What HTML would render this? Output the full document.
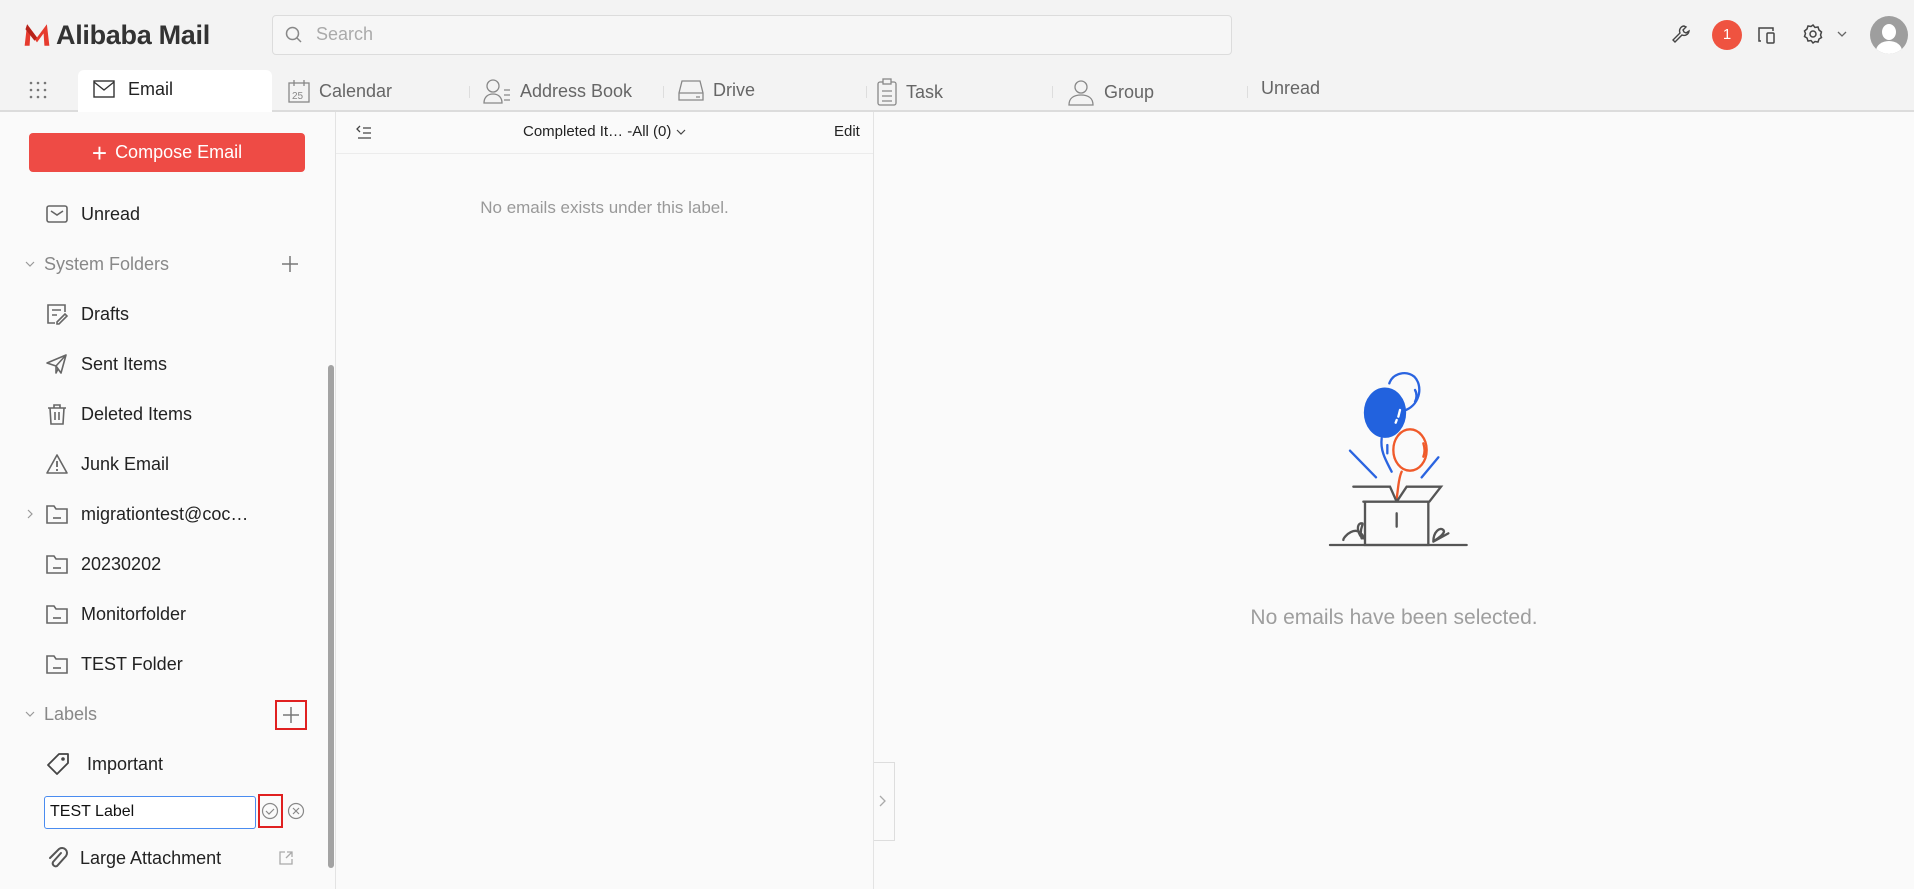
<!DOCTYPE html>
<html><head><meta charset="utf-8"><style>
*{box-sizing:border-box;margin:0;padding:0}
body{width:1914px;height:889px;overflow:hidden;background:#fafafa;font-family:"Liberation Sans",Arial,sans-serif;position:relative;color:#222}
.abs{position:absolute}
#hdr{left:0;top:0;width:1914px;height:112px;background:#f3f3f3;border-bottom:2px solid #dcdcdc}
.tab{position:absolute;top:78px;font-size:18px;color:#666;display:flex;align-items:center;gap:8px}
.sep{position:absolute;top:86px;width:1px;height:12px;background:#ddd}
.item{position:absolute;left:0;width:320px;height:40px;display:flex;align-items:center;font-size:18px;color:#222}
.item svg{position:absolute;left:45px}
.item span{position:absolute;left:81px}
.sec{color:#888}
</style></head><body>
<div id="hdr" class="abs"></div>
<!-- logo -->
<svg class="abs" style="left:23px;top:21px" width="28" height="28" viewBox="0 0 34 30"><path d="M2 28 L5 2 L17 18 L29 2 L32 28 L26 28 L25 13 L17 24 L9 13 L8 28Z" fill="#e63b2e"/><path d="M5 2 L17 18 L14 22 L3 8Z" fill="#b8231a"/></svg>
<div class="abs" style="left:56px;top:20px;font-size:27px;font-weight:bold;color:#333;letter-spacing:-0.3px">Alibaba Mail</div>
<!-- search -->
<div class="abs" style="left:272px;top:15px;width:960px;height:40px;border:1px solid #dcdcdc;border-radius:4px;background:#f6f6f6"></div>
<svg class="abs" style="left:284px;top:25px" width="20" height="20" viewBox="0 0 20 20"><circle cx="8.5" cy="8.5" r="6" fill="none" stroke="#888" stroke-width="1.5"/><path d="M13 13l4 4" stroke="#888" stroke-width="1.5"/></svg>
<div class="abs" style="left:316px;top:24px;font-size:18px;color:#aaa">Search</div>
<!-- right icons -->
<svg class="abs" style="left:1670px;top:23px" width="22" height="22" viewBox="0 0 22 22"><path d="M14 3a5 5 0 0 0-4 7L3 17l2 2 7-7a5 5 0 0 0 7-4l-3 2-2-1-1-2 3-3z" fill="none" stroke="#444" stroke-width="1.4"/></svg>
<div class="abs" style="left:1712px;top:20px;width:30px;height:30px;border-radius:50%;background:#ef5340;color:#fff;font-size:15px;text-align:center;line-height:30px">1</div>
<svg class="abs" style="left:1756px;top:24px" width="22" height="22" viewBox="0 0 22 22"><path d="M5 17H3V4h14v3" fill="none" stroke="#444" stroke-width="1.5"/><rect x="11" y="9" width="7" height="10" rx="1" fill="none" stroke="#444" stroke-width="1.5"/></svg>
<svg class="abs" style="left:1802px;top:23px" width="22" height="22" viewBox="0 0 22 22"><circle cx="11" cy="11" r="3" fill="none" stroke="#444" stroke-width="1.5"/><path d="M11 2l2 2.5 3-.5 1 3 2.5 2-1 3 1 2.5-2.5 1.5-1 3-3-.5L11 20l-2-2.5-3 .5-1-3-2.5-1.5 1-3-1-2.5 2.5-2 1-3 3 .5z" fill="none" stroke="#444" stroke-width="1.5"/></svg>
<svg class="abs" style="left:1837px;top:30px" width="10" height="8"><path d="M1 2l4 4 4-4" fill="none" stroke="#666" stroke-width="1.3"/></svg>
<div class="abs" style="left:1870px;top:16px;width:38px;height:38px;border-radius:50%;background:#9e9e9e;overflow:hidden"><div class="abs" style="left:12px;top:8px;width:14px;height:16px;border-radius:50%;background:#fff"></div><div class="abs" style="left:6px;top:25px;width:26px;height:20px;border-radius:50% 50% 0 0;background:#fff"></div></div>
<!-- tabs -->
<svg class="abs" style="left:28px;top:80px" width="20" height="20"><g fill="#777"><circle cx="3" cy="3" r="1.3"/><circle cx="10" cy="3" r="1.3"/><circle cx="17" cy="3" r="1.3"/><circle cx="3" cy="10" r="1.3"/><circle cx="10" cy="10" r="1.3"/><circle cx="17" cy="10" r="1.3"/><circle cx="3" cy="17" r="1.3"/><circle cx="10" cy="17" r="1.3"/><circle cx="17" cy="17" r="1.3"/></g></svg>
<div class="abs" style="left:78px;top:70px;width:194px;height:42px;background:#fff;border-radius:6px 6px 0 0"></div>
<div class="tab" style="left:92px;color:#222;gap:12px"><svg width="24" height="22"><rect x="2" y="3" width="20" height="16" fill="none" stroke="#333" stroke-width="1.4"/><path d="M2 4l10 8 10-8" fill="none" stroke="#333" stroke-width="1.4"/></svg>Email</div>
<div class="tab" style="left:287px"><svg width="24" height="26"><rect x="2" y="5" width="20" height="19" fill="none" stroke="#888" stroke-width="1.3"/><path d="M7 2v6M17 2v6" stroke="#888" stroke-width="1.3"/><text x="5" y="21" font-size="10" fill="#888" font-family="Liberation Sans">25</text></svg>Calendar</div>
<div class="sep" style="left:469px"></div>
<div class="tab" style="left:482px"><svg width="30" height="26"><circle cx="11" cy="8" r="6" fill="none" stroke="#888" stroke-width="1.3"/><path d="M2 25c0-6 4-9 9-9s9 3 9 9z" fill="none" stroke="#888" stroke-width="1.3"/><path d="M22 12h6M22 17h6M22 22h6" stroke="#888" stroke-width="1.3"/></svg>Address Book</div>
<div class="sep" style="left:663px"></div>
<div class="tab" style="left:677px"><svg width="28" height="24"><path d="M5 3h18l3 12v7H2v-7z" fill="none" stroke="#888" stroke-width="1.3"/><path d="M2 15h24M19 19h4" stroke="#888" stroke-width="1.3"/></svg>Drive</div>
<div class="sep" style="left:866px"></div>
<div class="tab" style="left:876px"><svg width="22" height="28"><rect x="2" y="4" width="18" height="23" rx="2" fill="none" stroke="#888" stroke-width="1.3"/><rect x="7" y="1" width="8" height="5" fill="#f3f3f3" stroke="#888" stroke-width="1.3"/><path d="M6 13h10M6 18h10M6 23h10" stroke="#888" stroke-width="1.3"/></svg>Task</div>
<div class="sep" style="left:1052px"></div>
<div class="tab" style="left:1066px"><svg width="30" height="28"><circle cx="15" cy="9" r="6" fill="none" stroke="#888" stroke-width="1.3"/><path d="M3 27c0-7 5-10 12-10s12 3 12 10z" fill="none" stroke="#888" stroke-width="1.3"/></svg>Group</div>
<div class="sep" style="left:1247px"></div>
<div class="tab" style="left:1261px">Unread</div>
<!-- panes -->
<div class="abs" style="left:335px;top:112px;width:1px;height:777px;background:#e3e3e3"></div>
<div class="abs" style="left:873px;top:112px;width:1px;height:777px;background:#e3e3e3"></div>
<div class="abs" style="left:328px;top:365px;width:6px;height:503px;background:#a3a3a3;border-radius:3px"></div>
<!-- compose -->
<div class="abs" style="left:29px;top:133px;width:276px;height:39px;background:#ee4b45;border-radius:4px;color:#fff;font-size:18px;display:flex;align-items:center;justify-content:center;gap:8px"><span style="font-size:26px;font-weight:300;line-height:1">+</span>Compose Email</div>
<!-- sidebar -->
<div class="item" style="top:194px"><svg width="24" height="22"><rect x="2" y="3" width="20" height="16" rx="2" fill="none" stroke="#666" stroke-width="1.6"/><path d="M6 8l6 4 6-4" fill="none" stroke="#666" stroke-width="1.6"/></svg><span>Unread</span></div>
<div class="item sec" style="top:244px"><svg style="left:25px" width="10" height="8"><path d="M1 2l4 4 4-4" fill="none" stroke="#999" stroke-width="1.2"/></svg><span style="left:44px;color:#888">System Folders</span><svg style="left:280px" width="20" height="20"><path d="M10 2v16M2 10h16" stroke="#777" stroke-width="1.5"/></svg></div>
<div class="item" style="top:294px"><svg width="24" height="24"><path d="M20 10V3H3v18h7" fill="none" stroke="#666" stroke-width="1.6"/><path d="M7 8h9M7 13h5M12 20l8-8 2 2-8 8h-2z" fill="none" stroke="#666" stroke-width="1.6"/></svg><span>Drafts</span></div>
<div class="item" style="top:344px"><svg width="24" height="24"><path d="M2 11L21 3l-5 18-5-7z M11 14v7l2-4 M11 14l10-11" fill="none" stroke="#666" stroke-width="1.6" stroke-linejoin="round"/></svg><span>Sent Items</span></div>
<div class="item" style="top:394px"><svg width="24" height="24"><path d="M3 6h18M9 6V3h6v3M5 6l1 16h12l1-16M10 10v8M14 10v8" fill="none" stroke="#666" stroke-width="1.6"/></svg><span>Deleted Items</span></div>
<div class="item" style="top:444px"><svg width="24" height="24"><path d="M12 3L2 21h20z" fill="none" stroke="#666" stroke-width="1.6" stroke-linejoin="round"/><path d="M12 9v6M12 17v2" stroke="#666" stroke-width="1.8"/></svg><span>Junk Email</span></div>
<div class="item" style="top:494px"><svg style="left:26px" width="8" height="12"><path d="M2 2l4 4-4 4" fill="none" stroke="#999" stroke-width="1.2"/></svg><svg width="24" height="22"><path d="M2 3h7l2 3h11v14H2z" fill="none" stroke="#666" stroke-width="1.6"/><path d="M8 15h8" stroke="#666" stroke-width="1.6"/></svg><span>migrationtest@coc…</span></div>
<div class="item" style="top:544px"><svg width="24" height="22"><path d="M2 3h7l2 3h11v14H2z" fill="none" stroke="#666" stroke-width="1.6"/><path d="M8 15h8" stroke="#666" stroke-width="1.6"/></svg><span>20230202</span></div>
<div class="item" style="top:594px"><svg width="24" height="22"><path d="M2 3h7l2 3h11v14H2z" fill="none" stroke="#666" stroke-width="1.6"/><path d="M8 15h8" stroke="#666" stroke-width="1.6"/></svg><span>Monitorfolder</span></div>
<div class="item" style="top:644px"><svg width="24" height="22"><path d="M2 3h7l2 3h11v14H2z" fill="none" stroke="#666" stroke-width="1.6"/><path d="M8 15h8" stroke="#666" stroke-width="1.6"/></svg><span>TEST Folder</span></div>
<div class="item sec" style="top:694px"><svg style="left:25px" width="10" height="8"><path d="M1 2l4 4 4-4" fill="none" stroke="#999" stroke-width="1.2"/></svg><span style="left:44px;color:#888">Labels</span></div>
<div class="abs" style="left:275px;top:700px;width:32px;height:30px;border:2px solid #e02020"></div>
<svg class="abs" style="left:281px;top:705px" width="20" height="20"><path d="M10 2v16M2 10h16" stroke="#777" stroke-width="1.5"/></svg>
<div class="item" style="top:744px"><svg width="26" height="26"><path d="M14 3h9v9L12 23 3 14z" fill="none" stroke="#444" stroke-width="1.8" stroke-linejoin="round"/><circle cx="18" cy="8" r="1.8" fill="#444"/></svg><span style="left:87px">Important</span></div>
<div class="abs" style="left:44px;top:796px;width:212px;height:33px;border:1.5px solid #4a8cf0;border-radius:3px;background:#fff;font-size:16px;padding:6px 5px;color:#111">TEST Label</div>
<div class="abs" style="left:258px;top:794px;width:25px;height:34px;border:2px solid #e02020"></div>
<svg class="abs" style="left:261px;top:802px" width="18" height="18"><circle cx="9" cy="9" r="7.5" fill="none" stroke="#888" stroke-width="1.2"/><path d="M5 9l3 3 5-5" fill="none" stroke="#888" stroke-width="1.2"/></svg>
<svg class="abs" style="left:287px;top:802px" width="18" height="18"><circle cx="9" cy="9" r="7.5" fill="none" stroke="#888" stroke-width="1.2"/><path d="M6 6l6 6M12 6l-6 6" stroke="#888" stroke-width="1.2"/></svg>
<div class="item" style="top:838px"><svg width="24" height="26"><path d="M16 8l-8 9a3 3 0 0 0 4 4l9-10a5 5 0 0 0-7-7L5 13" fill="none" stroke="#555" stroke-width="2" stroke-linecap="round"/></svg><span style="left:80px">Large Attachment</span><svg style="left:278px" width="16" height="16"><path d="M7 2H2v12h12V9M9 2h5v5M14 2L8 8" fill="none" stroke="#aaa" stroke-width="1.3"/></svg></div>
<!-- list pane -->
<svg class="abs" style="left:355px;top:124px" width="18" height="16"><path d="M5 2L2 5l3 3M8 4h8M8 9h8M3 14h13" fill="none" stroke="#444" stroke-width="1.3"/></svg>
<div class="abs" style="left:523px;top:123px;font-size:15px;color:#222">Completed It… -All (0) <svg width="10" height="8"><path d="M1 2l4 4 4-4" fill="none" stroke="#444" stroke-width="1.2"/></svg></div>
<div class="abs" style="left:834px;top:123px;font-size:15px;color:#222">Edit</div>
<div class="abs" style="left:336px;top:153px;width:537px;height:1px;background:#ececec"></div>
<div class="abs" style="left:336px;top:198px;width:537px;text-align:center;font-size:17px;color:#999">No emails exists under this label.</div>
<div class="abs" style="left:874px;top:762px;width:21px;height:79px;border:1px solid #ddd;border-left:none;background:#fafafa"></div>
<svg class="abs" style="left:878px;top:794px" width="10" height="14"><path d="M2 2l5 5-5 5" fill="none" stroke="#aaa" stroke-width="1.3"/></svg>
<!-- illustration -->
<svg class="abs" style="left:1300px;top:350px" width="200" height="210" viewBox="0 0 600 630">
<g fill="none" stroke-linecap="round" stroke-width="7">
<path d="M268 100c10-30 50-40 75-20 25 25 20 80-25 100" stroke="#2a64e0"/>
<path d="M345 120c6 10 6 25 0 35" stroke="#2a64e0"/>
<ellipse cx="255" cy="188" rx="60" ry="72" fill="#2262de" stroke="#2262de"/>
<path d="M300 180l-5 20M290 210l-3 8" stroke="#fff"/>
<path d="M245 265c-5 40 15 70 30 100M262 285v25" stroke="#2a64e0"/>
<ellipse cx="330" cy="300" rx="50" ry="62" stroke="#f05a2a"/>
<path d="M370 280c5 15 4 30 0 40" stroke="#f05a2a"/>
<path d="M305 365c-10 20-10 50-15 80" stroke="#f05a2a"/>
<path d="M150 302l78 80M415 322l-50 60" stroke="#2a64e0"/>
<g stroke="#555"><path d="M160 410h110l20 45M290 455l30-45h103l-35 45M195 455v130h190V455h-195M290 490v40"/>
<path d="M90 585h410M190 560c-20-40-60 0-60 10M185 565c-10-30 10-45 0-45-20 0-10 40 5 45M400 575c0-30 20-45 30-35s-25 30-30 35l45-25"/></g>
</g></svg>
<div class="abs" style="left:874px;top:606px;width:1040px;text-align:center;font-size:21px;color:#9e9e9e">No emails have been selected.</div>
</body></html>
